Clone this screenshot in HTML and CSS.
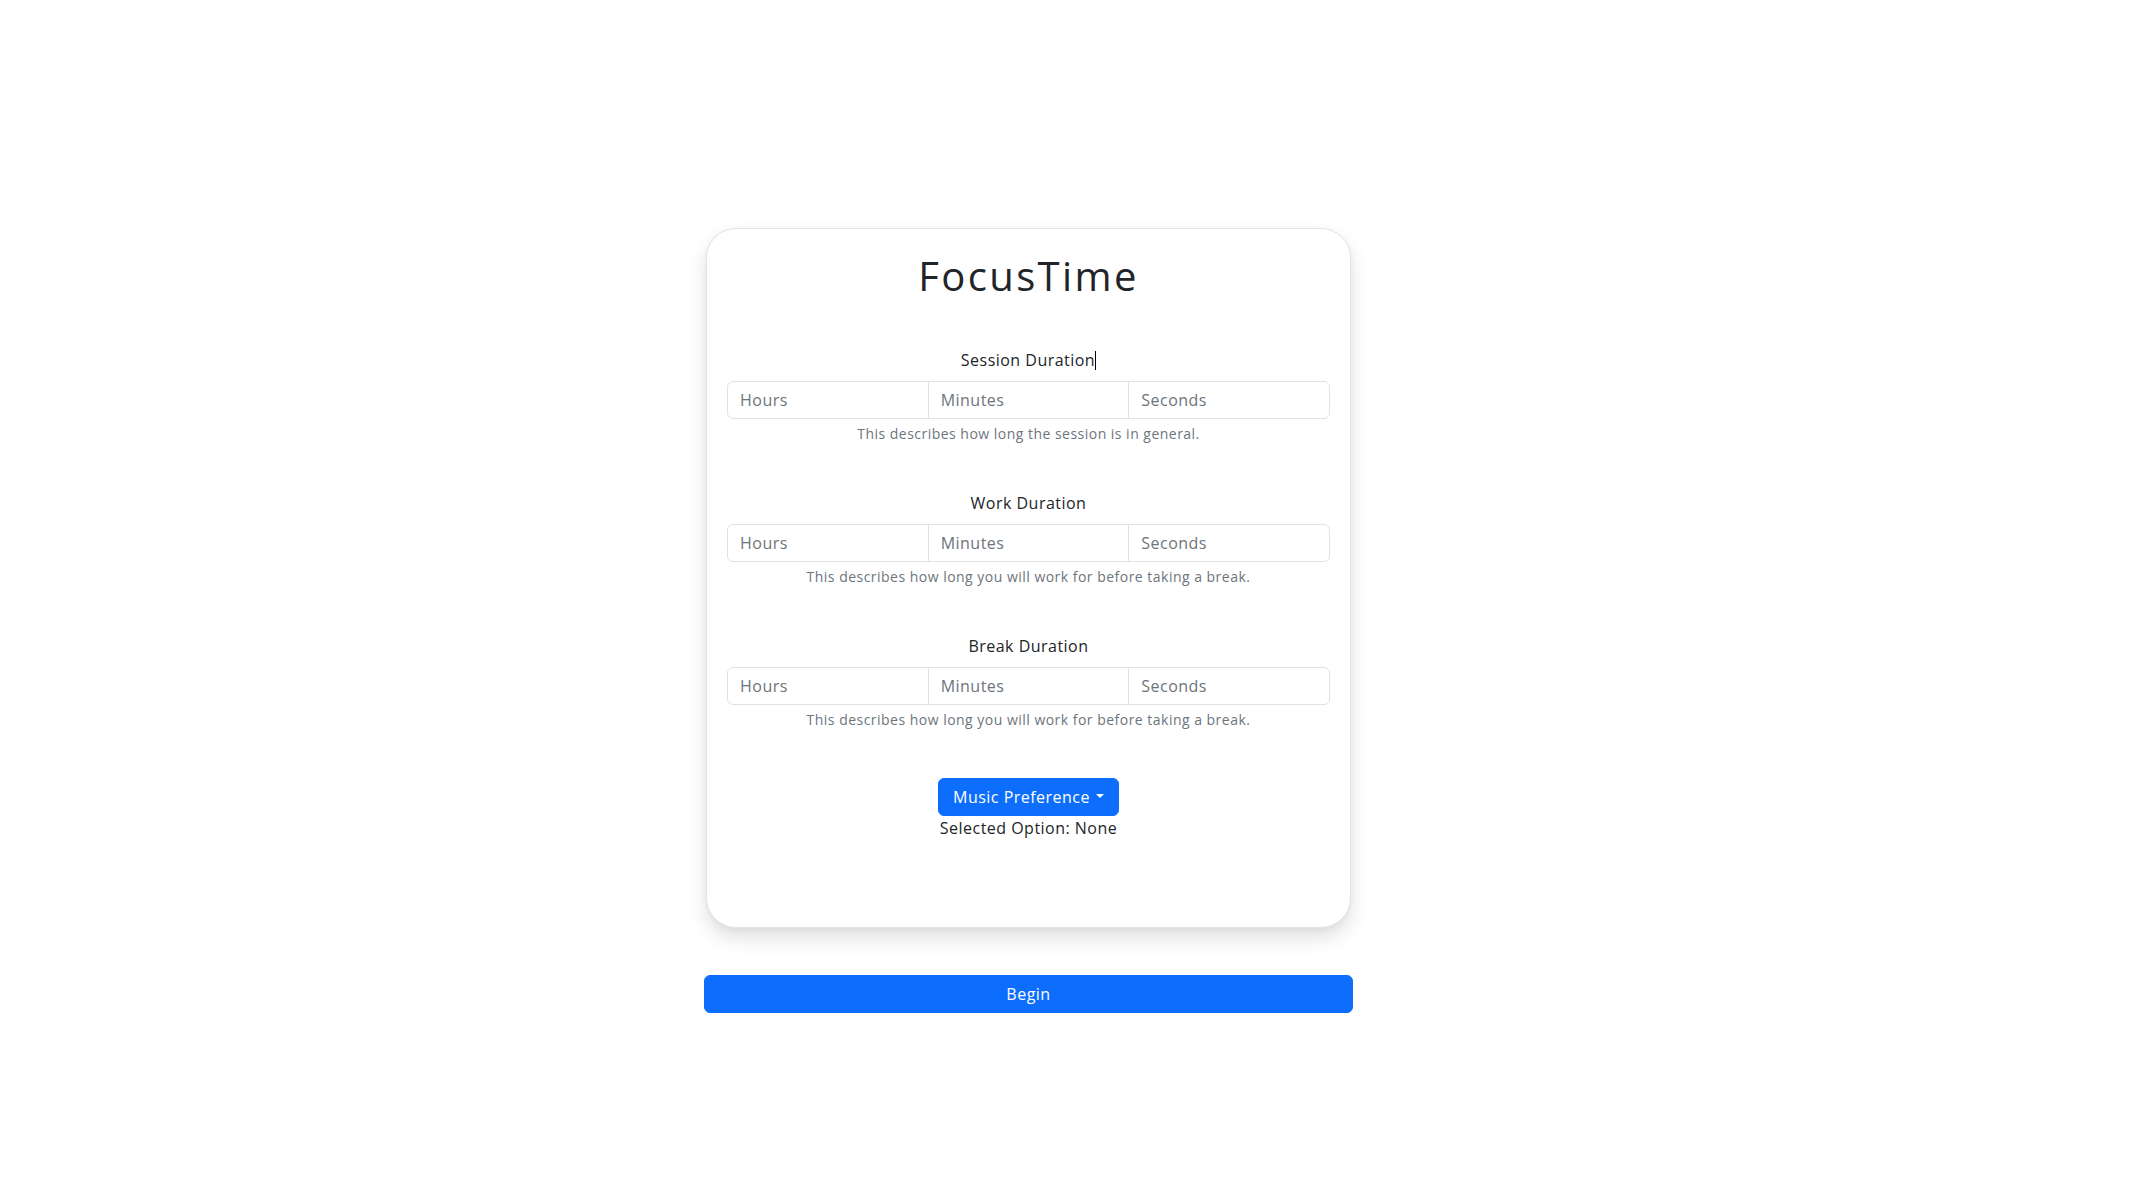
FILE: index.html
```html
<!DOCTYPE html>
<html lang="en">
<head>
<meta charset="utf-8">
<title>FocusTime</title>
<link rel="stylesheet" href="styles.css">
</head>
<body>
<main class="page">
  <div class="wrap">
    <section class="card">
      <h1 class="title">FocusTime</h1>

      <div class="field">
        <div class="label">Session Duration<span class="caret-cursor"></span></div>
        <div class="input-group">
          <input class="input" type="text" placeholder="Hours">
          <input class="input" type="text" placeholder="Minutes">
          <input class="input" type="text" placeholder="Seconds">
        </div>
        <div class="help">This describes how long the session is in general.</div>
      </div>

      <div class="field">
        <div class="label">Work Duration</div>
        <div class="input-group">
          <input class="input" type="text" placeholder="Hours">
          <input class="input" type="text" placeholder="Minutes">
          <input class="input" type="text" placeholder="Seconds">
        </div>
        <div class="help">This describes how long you will work for before taking a break.</div>
      </div>

      <div class="field">
        <div class="label">Break Duration</div>
        <div class="input-group">
          <input class="input" type="text" placeholder="Hours">
          <input class="input" type="text" placeholder="Minutes">
          <input class="input" type="text" placeholder="Seconds">
        </div>
        <div class="help">This describes how long you will work for before taking a break.</div>
      </div>

      <div class="music">
        <button class="btn btn-dropdown" type="button">Music Preference<span class="dd-caret"></span></button>
        <div class="selected">Selected Option: None</div>
      </div>
    </section>

    <button class="btn btn-begin" type="button">Begin</button>
  </div>
</main>
</body>
</html>
```

FILE: styles.css
```css
* { box-sizing: border-box; }

html, body {
  margin: 0;
  padding: 0;
  background: #ffffff;
}

body {
  font-family: "Open Sans", "Liberation Sans", sans-serif;
  font-size: 16px;
  line-height: 1.5;
  letter-spacing: 0.03em;
  color: #212529;
}

.page {
  padding-top: 228px;
  padding-left: 704px;
}

.wrap {
  width: 649px;
  display: flex;
  flex-direction: column;
  align-items: stretch;
}

.card {
  margin: 0 2px;
  border: 1px solid #e2e3e6;
  border-radius: 30px;
  background: #fff;
  box-shadow: 0 10px 20px rgba(0, 0, 0, 0.12), 0 2px 6px rgba(0, 0, 0, 0.04);
  padding: 23px 20px 87px;
  display: flex;
  flex-direction: column;
}

.title {
  margin: 0 0 48px;
  font-size: 40px;
  line-height: 48px;
  font-weight: 400;
  text-align: center;
  letter-spacing: 2.4px;
  color: #212529;
}

.field {
  display: flex;
  flex-direction: column;
  margin-bottom: 47px;
}

.label {
  text-align: center;
  line-height: 24px;
  margin-bottom: 9px;
  color: #212529;
}

.caret-cursor {
  display: inline-block;
  width: 1px;
  height: 19px;
  background: #000;
  vertical-align: -4px;
  margin-left: 0;
}

.input-group {
  display: flex;
}

.input {
  flex: 1 1 0;
  min-width: 0;
  height: 38px;
  margin: 0;
  padding: 6px 12px;
  border: 1px solid #dee2e6;
  border-radius: 0;
  font-family: inherit;
  font-size: 16px;
  line-height: 24px;
  letter-spacing: 0.03em;
  color: #212529;
  background: #fff;
  outline: none;
}

.input + .input { margin-left: -1px; }

.input:first-child {
  border-top-left-radius: 6px;
  border-bottom-left-radius: 6px;
}

.input:last-child {
  border-top-right-radius: 6px;
  border-bottom-right-radius: 6px;
}

.input::placeholder {
  color: #6c757d;
  opacity: 1;
}

.help {
  margin-top: 4px;
  font-size: 14px;
  line-height: 21px;
  text-align: center;
  color: #6c757d;
}

.music {
  margin-top: 1px;
  display: flex;
  flex-direction: column;
  align-items: center;
}

.btn {
  font-family: inherit;
  font-size: 16px;
  line-height: 24px;
  letter-spacing: 0.03em;
  color: #fff;
  background: #0d6efd;
  border: 1px solid #0d6efd;
  border-radius: 6px;
  padding: 6px 12px;
  cursor: pointer;
}

.btn-dropdown {
  display: inline-flex;
  align-items: center;
  width: 181px;
  justify-content: center;
}

.dd-caret {
  display: inline-block;
  margin-left: 6px;
  width: 0;
  height: 0;
  border-top: 4.5px solid #fff;
  border-left: 4px solid transparent;
  border-right: 4px solid transparent;
  margin-top: -2px;
}

.selected {
  line-height: 24px;
  text-align: center;
  color: #212529;
}

.btn-begin {
  margin-top: 47px;
  height: 38px;
  width: 100%;
  text-align: center;
}
```
